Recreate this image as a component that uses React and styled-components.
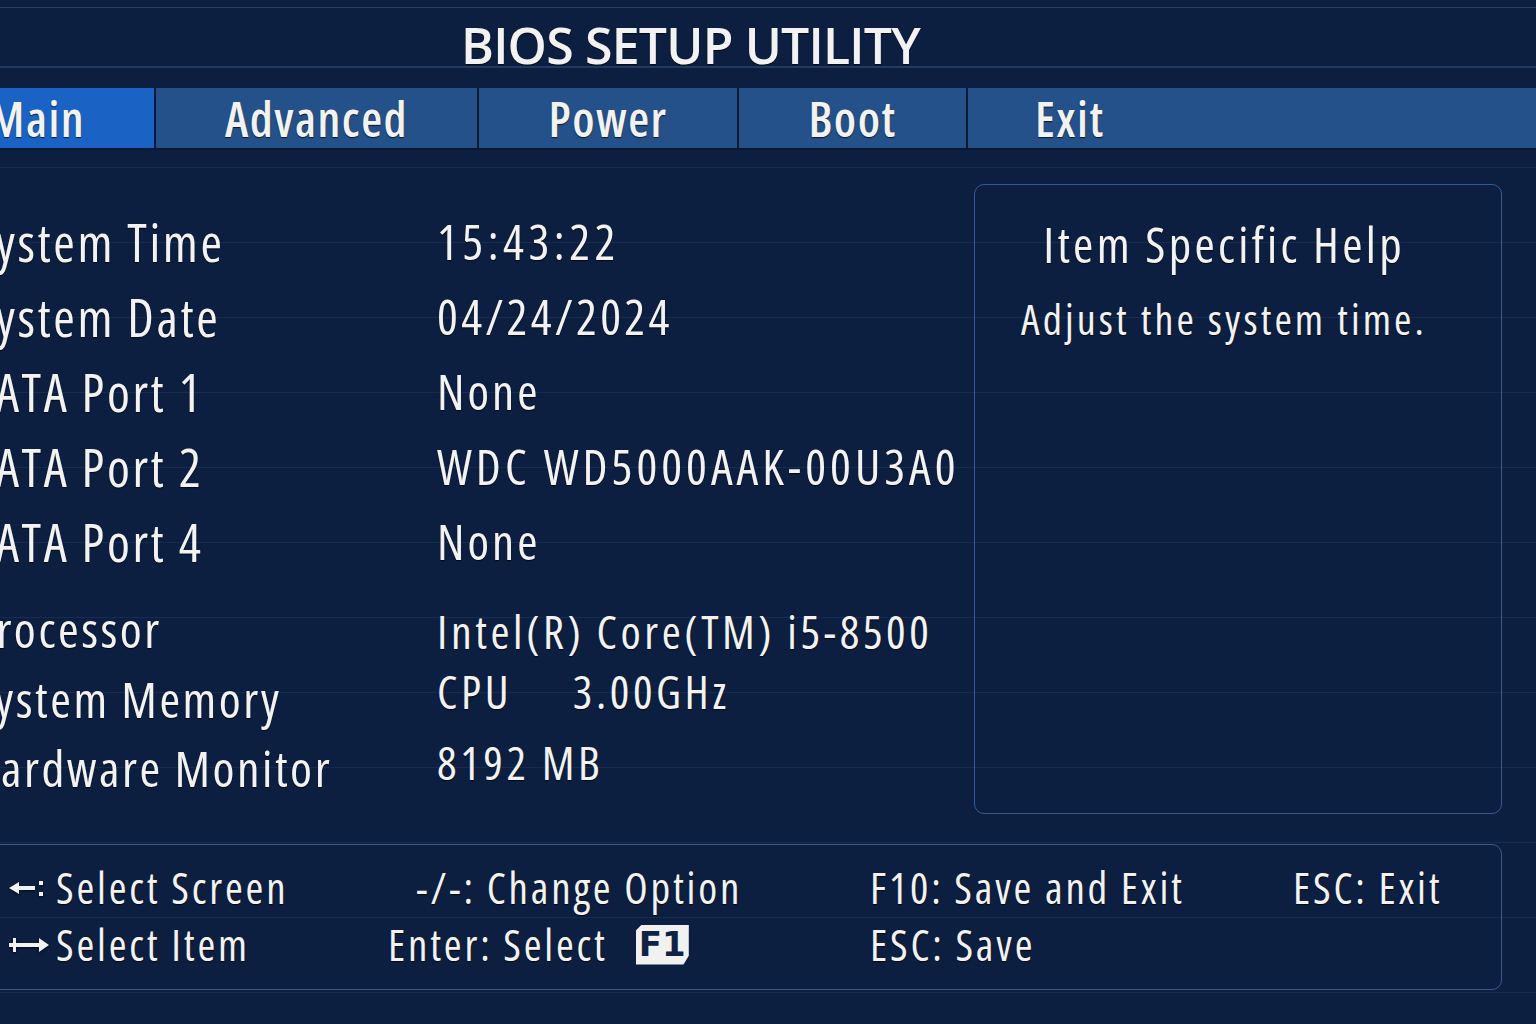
import React from "react";
import styled, { createGlobalStyle } from "styled-components";

const GlobalStyle = createGlobalStyle`
	html, body {
		margin: 0;
		padding: 0;
		background: #0c1f40;
	}
	body {
		font-family: "Open Sans", "DejaVu Sans", sans-serif;
		font-stretch: 75%;
		font-weight: 500;
		color: #f2f2f2;
	}
`;

const Page = styled.div`
	width: 1536px;
	height: 1024px;
	overflow: hidden;
	background-color: #0c1f40;
	background-image: repeating-linear-gradient(
		to bottom,
		transparent 0px,
		transparent 74px,
		rgba(80, 120, 170, 0.14) 74px,
		rgba(80, 120, 170, 0.14) 75px
	);
	background-position: 0 18px;
	text-shadow: 0 1px 1px rgba(0, 0, 0, 0.7);
`;

const Screen = styled.div`
	width: 1616px;
	margin-left: -80px;
	display: flex;
	flex-direction: column;
`;

const TitleBar = styled.header`
	height: 61px;
	box-sizing: border-box;
	margin-top: 7px;
	border-top: 1px solid rgba(70, 110, 160, 0.45);
	border-bottom: 2px solid rgba(70, 110, 160, 0.35);
	padding: 15px 0 0 541px;
`;

const Title = styled.h1`
	margin: 0;
	font-size: 50px;
	font-weight: 600;
	font-stretch: 100%;
	letter-spacing: -0.8px;
	line-height: 44px;
	white-space: nowrap;
`;

const TabBar = styled.nav`
	display: flex;
	height: 60px;
	margin-top: 20px;
	gap: 2px;
	background: #0a1a36;
	border-bottom: 2px solid #0a1a36;
`;

const Tab = styled.div`
	width: ${(p) => (p.$width ? `${p.$width}px` : "auto")};
	flex: ${(p) => (p.$grow ? 1 : "none")};
	display: flex;
	align-items: center;
	justify-content: ${(p) => (p.$grow ? "flex-start" : "center")};
	padding-left: ${(p) => (p.$grow ? "67px" : "0")};
	background: ${(p) => (p.$active ? "#1a63c4" : "#245189")};
	font-size: 48px;
	font-weight: 600;
	letter-spacing: 1.5px;
`;

const Content = styled.main`
	display: grid;
	grid-template-columns: 1fr 528px;
	padding: 34px 34px 0 52px;
	height: 630px;
`;

const Settings = styled.section`
	padding-top: 20px;
`;

const Row = styled.div`
	display: grid;
	grid-template-columns: 465px 1fr;
	height: 75px;
	font-size: 52px;
	line-height: 75px;
	white-space: nowrap;
`;

const Label = styled.span`
	letter-spacing: 2.6px;
`;

const Value = styled.span`
	font-size: 49px;
	letter-spacing: ${(p) => p.$spacing}px;
`;

const InfoBlock = styled.div`
	display: grid;
	grid-template-columns: 465px 1fr;
	margin-top: 15px;
	white-space: nowrap;
`;

const InfoLabels = styled.div`
	display: flex;
	flex-direction: column;
	font-size: 50px;
	letter-spacing: 2.5px;
`;

const InfoLabel = styled.span`
	line-height: ${(p) => p.$lh || 70}px;
`;

const InfoValues = styled.div`
	display: flex;
	flex-direction: column;
	padding-top: 7px;
	font-size: 46px;
	letter-spacing: 3.6px;
`;

const InfoValue = styled.span`
	line-height: 60px;
	margin-top: ${(p) => p.$gap || 0}px;
	white-space: pre;
`;

const HelpBox = styled.aside`
	border: 1.5px solid #2f5d99;
	border-radius: 10px;
	padding: 26px 28px 0 0;
	display: flex;
	flex-direction: column;
	align-items: center;
	text-align: center;
`;

const HelpTitle = styled.h2`
	margin: 0;
	font-size: 49px;
	font-weight: 500;
	line-height: 66px;
	letter-spacing: 3.3px;
`;

const HelpText = styled.p`
	margin: 14px 0 0;
	font-size: 42px;
	line-height: 56px;
	letter-spacing: 3.1px;
`;

const Footer = styled.footer`
	margin: 30px 34px 0 40px;
	height: 146px;
	box-sizing: border-box;
	border: 1.5px solid #2f5d99;
	border-radius: 10px;
	padding: 14px 0 0 48px;
	display: grid;
	grid-template-columns: 379px 482px 423px auto;
	grid-auto-rows: 57px;
	font-size: 43px;
	line-height: 57px;
	letter-spacing: 2.8px;
	white-space: nowrap;
`;

const Hint = styled.div`
	display: flex;
	align-items: center;
	padding-left: ${(p) => p.$indent || 0}px;
`;

const ArrowIcon = styled.svg`
	width: 44px;
	height: 30px;
	margin-right: 3px;
	flex: none;
	filter: drop-shadow(0 1px 1px rgba(0, 0, 0, 0.7));
`;

const KeyCap = styled.span`
	display: inline-flex;
	align-items: center;
	justify-content: center;
	margin-left: 28px;
	width: 53px;
	height: 40px;
	background: #f1f1f1;
	color: #0f2244;
	font-family: "DejaVu Sans", sans-serif;
	font-stretch: normal;
	font-weight: 700;
	font-size: 34px;
	letter-spacing: 0;
	text-shadow: none;
	clip-path: polygon(6px 0, 100% 0, 100% 78%, 90% 100%, 0 100%, 0 6px);
`;

const rows = [
	["System Time", "15:43:22", 4.5],
	["System Date", "04/24/2024", 3.3],
	["SATA Port 1", "None", 3],
	["SATA Port 2", "WDC WD5000AAK-00U3A0", 4],
	["SATA Port 4", "None", 3],
];

const tabs = [
	{ name: "Main", width: 234, active: true },
	{ name: "Advanced", width: 321 },
	{ name: "Power", width: 258 },
	{ name: "Boot", width: 227 },
	{ name: "Exit", grow: true },
];

const LeftArrow = () => (
	<ArrowIcon viewBox="0 0 44 30">
		<path d="M0 15 L10 9 L10 13 L26 13 L26 17 L10 17 L10 21 Z" fill="#f2f2f2" />
		<rect x="30" y="8" width="4" height="4" fill="#f2f2f2" />
		<rect x="30" y="19" width="4" height="4" fill="#f2f2f2" />
	</ArrowIcon>
);

const BothArrow = () => (
	<ArrowIcon viewBox="0 0 44 30">
		<rect x="4" y="8" width="3" height="14" fill="#f2f2f2" />
		<path d="M0 13 L30 13 L30 8 L40 15 L30 22 L30 17 L0 17 Z" fill="#f2f2f2" />
	</ArrowIcon>
);

const App = () => {
	return (
		<Page>
			<GlobalStyle />
			<Screen>
				<TitleBar>
					<Title>BIOS SETUP UTILITY</Title>
				</TitleBar>
				<TabBar>
					{tabs.map((t) => (
						<Tab key={t.name} $width={t.width} $grow={t.grow} $active={t.active}>
							{t.name}
						</Tab>
					))}
				</TabBar>
				<Content>
					<Settings>
						{rows.map(([label, value, spacing]) => (
							<Row key={label}>
								<Label>{label}</Label>
								<Value $spacing={spacing}>{value}</Value>
							</Row>
						))}
						<InfoBlock>
							<InfoLabels>
								<InfoLabel>Processor</InfoLabel>
								<InfoLabel>System Memory</InfoLabel>
								<InfoLabel $lh={68}>Hardware Monitor</InfoLabel>
							</InfoLabels>
							<InfoValues>
								<InfoValue>Intel(R) Core(TM) i5-8500</InfoValue>
								<InfoValue>{"CPU     3.00GHz"}</InfoValue>
								<InfoValue $gap={11}>8192 MB</InfoValue>
							</InfoValues>
						</InfoBlock>
					</Settings>
					<HelpBox>
						<HelpTitle>Item Specific Help</HelpTitle>
						<HelpText>Adjust the system time.</HelpText>
					</HelpBox>
				</Content>
				<Footer>
					<Hint>
						<LeftArrow />
						Select Screen
					</Hint>
					<Hint $indent={28}>-/-: Change Option</Hint>
					<Hint>F10: Save and Exit</Hint>
					<Hint>ESC: Exit</Hint>
					<Hint>
						<BothArrow />
						Select Item
					</Hint>
					<Hint>
						Enter: Select
						<KeyCap>F1</KeyCap>
					</Hint>
					<Hint>ESC: Save</Hint>
					<Hint />
				</Footer>
			</Screen>
		</Page>
	);
};

export default App;
